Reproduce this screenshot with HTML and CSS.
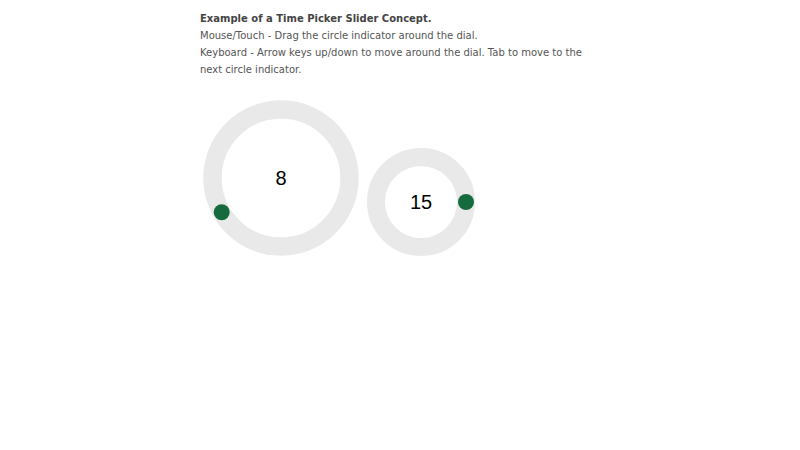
FILE: index.html
```html
<!DOCTYPE html>
<html>
<head>
<meta charset="utf-8">
<link rel="stylesheet" href="styles.css">
</head>
<body>
<main class="page">
  <div class="intro">
    <p class="title">Example of a Time Picker Slider Concept.</p>
    <p>Mouse/Touch - Drag the circle indicator around the dial.</p>
    <p>Keyboard - Arrow keys up/down to move around the dial. Tab to move to the next circle indicator.</p>
  </div>
  <div class="dials">
    <div class="dial dial-hours">
      <svg class="dial-svg" width="156" height="156" viewBox="0 0 156 156">
        <circle cx="78" cy="78" r="68.5" fill="none" stroke="#e9e9e9" stroke-width="18.5"/>
        <circle cx="18.7" cy="112.25" r="8" fill="#166b3e"/>
      </svg>
      <span class="dial-value">8</span>
    </div>
    <div class="dial dial-minutes">
      <svg class="dial-svg" width="108" height="108" viewBox="0 0 108 108">
        <circle cx="54" cy="54" r="45" fill="none" stroke="#e9e9e9" stroke-width="18"/>
        <circle cx="99" cy="54" r="8" fill="#166b3e"/>
      </svg>
      <span class="dial-value">15</span>
    </div>
  </div>
</main>
</body>
</html>
```

FILE: styles.css
```css
html, body {
  margin: 0;
  padding: 0;
  background: #ffffff;
}

.page {
  width: 400px;
  margin: 0 auto;
  padding-top: 10px;
  font-family: "DejaVu Sans", sans-serif;
  color: #555555;
}

.intro p {
  margin: 0;
  font-size: 10px;
  line-height: 17px;
}

.intro .title {
  font-weight: bold;
  color: #444444;
}

.dials {
  display: flex;
  align-items: flex-end;
  gap: 8px;
  margin-top: 22px;
  padding-left: 3px;
}

.dial {
  position: relative;
  display: flex;
  align-items: center;
  justify-content: center;
}

.dial-svg {
  display: block;
  overflow: visible;
}

.dial-value {
  position: absolute;
  font-family: "Liberation Sans", Arial, sans-serif;
  font-size: 20px;
  color: #000000;
}
```
